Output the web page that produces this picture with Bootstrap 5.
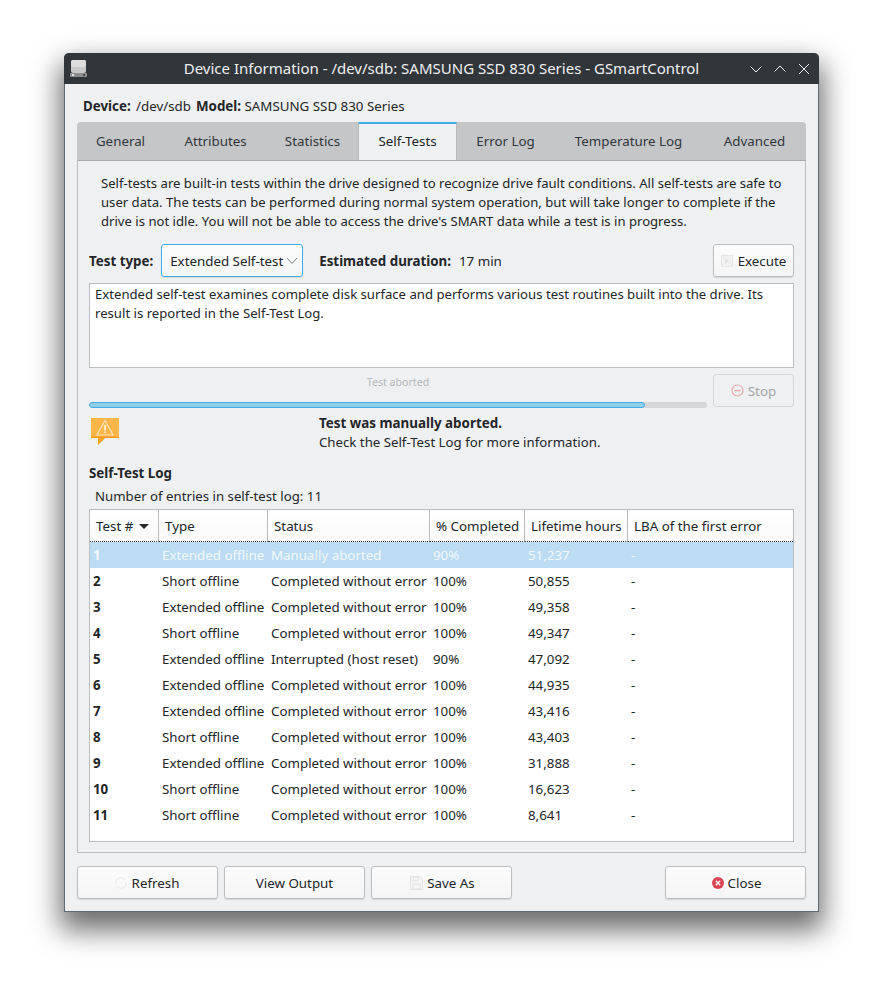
<!DOCTYPE html>
<html lang="en">
<head>
<meta charset="utf-8">
<title>GSmartControl</title>
<link href="https://cdn.jsdelivr.net/npm/bootstrap@5.3.0/dist/css/bootstrap.min.css" rel="stylesheet">
<style>
html,body{height:988px;overflow:hidden;background:#fff}
body{font-family:"Noto Sans",sans-serif;font-size:13.33px;line-height:18px;color:#232629;padding:53px 64px 0}
b,.fw-bold{font-weight:700!important}
.win{width:755px;height:859px;background:#eff0f1;border:1px solid #5f6a73;border-top:0;border-radius:5px 5px 0 0;box-shadow:0 14px 28px 4px rgba(0,0,0,.58)}
.tbar{height:31px;background:#31363b;border-radius:5px 5px 0 0;color:#eff0f1;margin:0 -1px;padding:0 9px 0 5px;position:relative}
.tbar .ttl{position:absolute;left:0;right:0;top:0;line-height:31px;text-align:center;font-size:15px}
.tbar .wbtns{margin-left:auto;position:relative}
.hdrline{height:38px;padding:13px 0 0 18px;line-height:19px}
.hdrline .lbl1{margin-right:2px}
.hdrline .gapv{margin-right:5px}
.tabbox{margin:0 12px;width:729px}
.tabstrip{height:38px;background:#c4c6c8;border-radius:4px 4px 0 0;border:0;flex-wrap:nowrap;position:relative}
.tabstrip .nav-link{height:38px;padding:10px 0 0;text-align:center;color:#31363b;border:0;border-radius:0;background:none;line-height:18px}
.tabstrip .nav-link.active{background:#eff0f1;border-top:2px solid #3daee9;padding-top:8px;color:#232629;border-left:1px solid #b8babc;border-right:1px solid #b8babc}
.tabbody{height:693px;border:1px solid #babdc0;border-top-color:#a8abae;padding:0 11px}
.intro{padding:13px 12px 0;height:83px;line-height:19px;font-size:13.12px}
.intro p{margin:0;width:692px}
.typerow{height:33px}
.combo{width:142px;height:33px;border:1px solid #3daee9;border-radius:3px;background:linear-gradient(#fcfcfc,#f4f5f5);box-shadow:0 1px 1px rgba(0,0,0,.1);padding:0 4px 0 8px;margin:0 16px 0 8px;color:#232629}
.gbtn{border:1px solid #bcbec0;border-radius:3px;background:linear-gradient(#fcfcfc,#f5f5f6);box-shadow:0 1px 1px rgba(0,0,0,.12);height:33px;padding:0;font-size:13.33px;color:#232629;line-height:18px;display:flex;align-items:center;justify-content:center;gap:4px}
.gbtn:disabled{opacity:1}
.exec{width:81px;gap:5px}
.stopb{width:81px;background:#eff0f1;color:#a3a6a9;border-color:#d5d6d8;box-shadow:none}
.desc{width:705px;height:85px;margin-top:6px;background:#fff;border:1px solid #babdc0;padding:1px 5px;line-height:19px;color:#232629;font-size:13.15px}
.progcol{width:618px}
.progcap{font-size:10.6px;color:#b4b6b8;text-align:center;line-height:14px;padding-top:7px;height:26px}
.ptrack{height:6px;background:#d6d7d8;border-radius:3px;overflow:hidden;display:flex;margin:0;border:0}
.pfill{background:#93cee9;border:1px solid #3daee9;border-radius:3px;height:6px}
.statrow{height:50px}
.statmsg{padding:6px 0 0 230px;line-height:19px;font-size:13.24px}
.statmsg b{font-size:13.4px}
.logtitle{margin-top:6px;line-height:19px}
.logcount{padding:4px 0 0 6px;line-height:19px;height:26px;font-size:13.22px}
.tblwrap{width:705px;height:333px;background:#fff;border:1px solid #babdc0;overflow:hidden}
.logtable{table-layout:fixed;width:703px;margin:0;border-collapse:separate;border-spacing:0;--bs-table-bg:transparent;color:#232629;font-size:13.33px}
.logtable th,.logtable td{padding:0 0 0 3px;border:0;white-space:nowrap;overflow:hidden;line-height:18px;color:#232629}
.logtable th{height:32px;font-weight:400;padding-left:6px;background:linear-gradient(#fff,#fafafa);border-right:1px solid #babdc0;border-bottom:1px dotted #31363b;vertical-align:middle}
.logtable th:last-child{border-right:0}
.logtable td{height:26px;vertical-align:middle}
.logtable td:first-child{font-weight:700}
.logtable tr.picked td{background:#bcdcf3;color:#f1f8fd}
.sortarrow{display:inline-block;width:0;height:0;border-left:5px solid transparent;border-right:5px solid transparent;border-top:5px solid #232629;margin-left:6px;vertical-align:2px}
.foot{margin:13px 12px 0;width:729px}
.foot .gbtn{width:141px}
.foot .nudger{padding-left:2px}
.foot .nudgel{padding-right:2px}
.warnico{position:absolute;left:91px;top:418px}
</style>
</head>
<body>
<div class="win d-flex flex-column">
  <div class="tbar d-flex align-items-center">
    <svg class="position-relative" width="20" height="20" viewBox="0 0 20 20"><rect x="2" y="1" width="15" height="13" rx="2" fill="#c9c9c9"/><rect x="2" y="1" width="15" height="7" rx="2" fill="#dedede"/><path d="M1 14h17v3a1 1 0 0 1-1 1H2a1 1 0 0 1-1-1z" fill="#8e8e8e"/><rect x="3" y="15" width="2" height="2" fill="#e8e8e8"/><rect x="14" y="15" width="2" height="2" fill="#4a4a4a"/></svg>
    <div class="ttl">Device Information - /dev/sdb: SAMSUNG SSD 830 Series - GSmartControl</div>
    <div class="wbtns d-flex align-items-center" style="gap:12px">
      <svg width="12" height="12" viewBox="0 0 12 12"><path d="M.5 3.500 6 9l5.500-5.500" fill="none" stroke="#eff0f1" stroke-width="1"/></svg>
      <svg width="12" height="12" viewBox="0 0 12 12"><path d="M.5 8.500 6 3l5.500 5.500" fill="none" stroke="#eff0f1" stroke-width="1"/></svg>
      <svg width="12" height="12" viewBox="0 0 12 12"><path d="M1 1l10 10M11 1 1 11" fill="none" stroke="#eff0f1" stroke-width="1"/></svg>
    </div>
  </div>
  <div class="hdrline"><b class="lbl1">Device:</b> <span class="gapv">/dev/sdb</span><b>Model:</b> SAMSUNG SSD 830 Series</div>
  <div class="tabbox">
    <ul class="nav tabstrip">
      <li class="nav-item" style="width:87px"><a class="nav-link" href="#">General</a></li>
      <li class="nav-item" style="width:103px"><a class="nav-link" href="#">Attributes</a></li>
      <li class="nav-item" style="width:91px"><a class="nav-link" href="#">Statistics</a></li>
      <li class="nav-item" style="width:99px"><a class="nav-link active" href="#">Self-Tests</a></li>
      <li class="nav-item" style="width:97px"><a class="nav-link" href="#">Error Log</a></li>
      <li class="nav-item" style="width:149px"><a class="nav-link" href="#">Temperature Log</a></li>
      <li class="nav-item" style="width:103px"><a class="nav-link" href="#">Advanced</a></li>
    </ul>
    <div class="tabbody">
      <div class="intro"><p>Self-tests are built-in tests within the drive designed to recognize drive fault conditions. All self-tests are safe to user data. The tests can be performed during normal system operation, but will take longer to complete if the drive is not idle. You will not be able to access the drive's SMART data while a test is in progress.</p></div>
      <div class="typerow d-flex align-items-center">
        <b>Test type:</b>
        <div class="combo d-flex align-items-center justify-content-between"><span>Extended Self-test</span>
          <svg width="12" height="8" viewBox="0 0 12 8"><path d="M1 1l5 5.500L11 1" fill="none" stroke="#7f8386" stroke-width="1"/></svg>
        </div>
        <b>Estimated duration:</b><span class="ms-2">17 min</span>
        <button class="gbtn exec ms-auto" type="button">
          <svg width="12" height="12" viewBox="0 0 12 12"><rect x=".5" y=".5" width="11" height="11" fill="#f1f1f1" stroke="#e6e6e6"/><path d="M4 3l4 3-4 3z" fill="#e0e0e0"/></svg>Execute</button>
      </div>
      <div class="desc">Extended self-test examines complete disk surface and performs various test routines built into the drive. Its result is reported in the Self-Test Log.</div>
      <div class="d-flex justify-content-between" style="width:705px;height:40px;padding-top:6px">
        <div class="progcol" style="margin-top:-6px">
          <div class="progcap">Test aborted</div>
          <div class="ptrack" style="margin-top:8px"><div class="pfill" style="width:556px"></div></div>
        </div>
        <button class="gbtn stopb" type="button" disabled>
          <svg width="13" height="13" viewBox="0 0 13 13"><circle cx="6.500" cy="6.500" r="5.500" fill="none" stroke="#eaa9ad" stroke-width="1.200"/><rect x="3.500" y="5.800" width="6" height="1.500" fill="#eaa9ad"/></svg>Stop</button>
      </div>
      <div class="statrow d-flex">
        <div class="statmsg"><b>Test was manually aborted.</b><br>Check the Self-Test Log for more information.</div>
      </div>
      <div class="logtitle"><b>Self-Test Log</b></div>
      <div class="logcount">Number of entries in self-test log: 11</div>
      <div class="tblwrap">
        <table class="table logtable">
          <colgroup><col style="width:69px"><col style="width:109px"><col style="width:162px"><col style="width:95px"><col style="width:103px"><col></colgroup>
          <thead><tr><th>Test #<span class="sortarrow"></span></th><th>Type</th><th>Status</th><th>% Completed</th><th>Lifetime hours</th><th>LBA of the first error</th></tr></thead>
          <tbody>
            <tr class="picked"><td>1</td><td>Extended offline</td><td>Manually aborted</td><td>90%</td><td>51,237</td><td>-</td></tr>
            <tr><td>2</td><td>Short offline</td><td>Completed without error</td><td>100%</td><td>50,855</td><td>-</td></tr>
            <tr><td>3</td><td>Extended offline</td><td>Completed without error</td><td>100%</td><td>49,358</td><td>-</td></tr>
            <tr><td>4</td><td>Short offline</td><td>Completed without error</td><td>100%</td><td>49,347</td><td>-</td></tr>
            <tr><td>5</td><td>Extended offline</td><td>Interrupted (host reset)</td><td>90%</td><td>47,092</td><td>-</td></tr>
            <tr><td>6</td><td>Extended offline</td><td>Completed without error</td><td>100%</td><td>44,935</td><td>-</td></tr>
            <tr><td>7</td><td>Extended offline</td><td>Completed without error</td><td>100%</td><td>43,416</td><td>-</td></tr>
            <tr><td>8</td><td>Short offline</td><td>Completed without error</td><td>100%</td><td>43,403</td><td>-</td></tr>
            <tr><td>9</td><td>Extended offline</td><td>Completed without error</td><td>100%</td><td>31,888</td><td>-</td></tr>
            <tr><td>10</td><td>Short offline</td><td>Completed without error</td><td>100%</td><td>16,623</td><td>-</td></tr>
            <tr><td>11</td><td>Short offline</td><td>Completed without error</td><td>100%</td><td>8,641</td><td>-</td></tr>
          </tbody>
        </table>
      </div>
    </div>
  </div>
  <div class="foot d-flex" style="gap:6px">
    <button class="gbtn nudgel" type="button"><svg width="14" height="14" viewBox="0 0 14 14"><path d="M2 8a5 5 0 0 1 9-4M12 6a5 5 0 0 1-9 4" fill="none" stroke="#ececec" stroke-width="1.200"/></svg>Refresh</button>
    <button class="gbtn" type="button">View Output</button>
    <button class="gbtn nudger" type="button"><svg width="13" height="14" viewBox="0 0 13 14"><path d="M.5.500h9l3 3v10H.500z" fill="#f6f6f6" stroke="#e2e2e2"/><rect x="3" y="1" width="5" height="4" fill="none" stroke="#e2e2e2"/><rect x="3" y="8" width="7" height="5" fill="none" stroke="#e2e2e2"/></svg>Save As</button>
    <button class="gbtn nudger ms-auto" type="button"><svg width="12" height="12" viewBox="0 0 12 12"><circle cx="6" cy="6" r="6" fill="#da4453"/><path d="M3.800 3.800l4.400 4.400M8.200 3.800 3.800 8.200" stroke="#fff" stroke-width="1.300"/></svg>Close</button>
  </div>
</div>
<svg class="warnico" width="28" height="28" viewBox="0 0 28 28"><path d="M0 0h28v20H14l-7 7v-7H0z" fill="#fbb64a"/><rect y="18.500" width="28" height="1.500" fill="#f59a1c"/><path d="M7 20v7l7-7z" fill="#f7a52d"/><path d="M14 2.500 22 17H6z" fill="none" stroke="#fee3b6" stroke-width="1.200"/><rect x="13.300" y="7" width="1.400" height="5.500" fill="#fff"/><rect x="13.300" y="13.500" width="1.400" height="1.500" fill="#fff"/></svg>
</body>
</html>
